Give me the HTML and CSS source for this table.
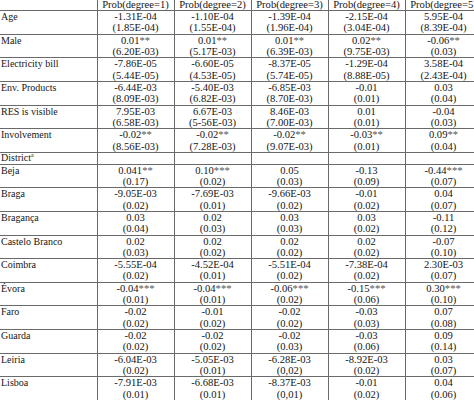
FILE: index.html
```html
<!DOCTYPE html>
<html>
<head>
<meta charset="utf-8">
<link rel="stylesheet" href="styles.css">
</head>
<body>
<table class="results">
<colgroup>
<col class="c-label"><col class="c-val"><col class="c-val"><col class="c-val"><col class="c-val"><col class="c-val">
</colgroup>
<thead>
<tr><th></th><th>Prob(degree=1)</th><th>Prob(degree=2)</th><th>Prob(degree=3)</th><th>Prob(degree=4)</th><th>Prob(degree=5)</th></tr>
</thead>
<tbody>
<tr><td class="label">Age</td><td>-1.31E-04<br>(1.85E-04)</td><td>-1.10E-04<br>(1.55E-04)</td><td>-1.39E-04<br>(1.96E-04)</td><td>-2.15E-04<br>(3.04E-04)</td><td>5.95E-04<br>(8.39E-04)</td></tr>
<tr><td class="label">Male</td><td>0.01<span class="sig">**</span><br>(6.20E-03)</td><td>0.01<span class="sig">**</span><br>(5.17E-03)</td><td>0.01<span class="sig">**</span><br>(6.39E-03)</td><td>0.02<span class="sig">**</span><br>(9.75E-03)</td><td>-0.06<span class="sig">**</span><br>(0.03)</td></tr>
<tr><td class="label">Electricity bill</td><td>-7.86E-05<br>(5.44E-05)</td><td>-6.60E-05<br>(4.53E-05)</td><td>-8.37E-05<br>(5.74E-05)</td><td>-1.29E-04<br>(8.88E-05)</td><td>3.58E-04<br>(2.43E-04)</td></tr>
<tr><td class="label">Env. Products</td><td>-6.44E-03<br>(8.09E-03)</td><td>-5.40E-03<br>(6.82E-03)</td><td>-6.85E-03<br>(8.70E-03)</td><td>-0.01<br>(0.01)</td><td>0.03<br>(0.04)</td></tr>
<tr><td class="label">RES is visible</td><td>7.95E-03<br>(6.58E-03)</td><td>6.67E-03<br>(5-56E-03)</td><td>8.46E-03<br>(7.00E-03)</td><td>0.01<br>(0.01)</td><td>-0.04<br>(0.03)</td></tr>
<tr><td class="label">Involvement</td><td>-0.02<span class="sig">**</span><br>(8.56E-03)</td><td>-0.02<span class="sig">**</span><br>(7.28E-03)</td><td>-0.02<span class="sig">**</span><br>(9.07E-03)</td><td>-0.03<span class="sig">**</span><br>(0.01)</td><td>0.09<span class="sig">**</span><br>(0.04)</td></tr>
<tr class="group"><td class="label">District<sup>a</sup></td><td></td><td></td><td></td><td></td><td></td></tr>
<tr><td class="label">Beja</td><td>0.041<span class="sig">**</span><br>(0.17)</td><td>0.10<span class="sig">***</span><br>(0.02)</td><td>0.05<br>(0.03)</td><td>-0.13<br>(0.09)</td><td>-0.44<span class="sig">***</span><br>(0.07)</td></tr>
<tr><td class="label">Braga</td><td>-9.05E-03<br>(0.02)</td><td>-7.69E-03<br>(0.01)</td><td>-9.66E-03<br>(0.02)</td><td>-0.01<br>(0.02)</td><td>0.04<br>(0.07)</td></tr>
<tr><td class="label">Bragança</td><td>0.03<br>(0.04)</td><td>0.02<br>(0.03)</td><td>0.03<br>(0.03)</td><td>0.03<br>(0.02)</td><td>-0.11<br>(0.12)</td></tr>
<tr><td class="label">Castelo Branco</td><td>0.02<br>(0.03)</td><td>0.02<br>(0.02)</td><td>0.02<br>(0.02)</td><td>0.02<br>(0.02)</td><td>-0.07<br>(0.10)</td></tr>
<tr><td class="label">Coimbra</td><td>-5.55E-04<br>(0.02)</td><td>-4.52E-04<br>(0.01)</td><td>-5.51E-04<br>(0.02)</td><td>-7.38E-04<br>(0.02)</td><td>2.30E-03<br>(0.07)</td></tr>
<tr><td class="label">Évora</td><td>-0.04<span class="sig">***</span><br>(0.01)</td><td>-0.04<span class="sig">***</span><br>(0.01)</td><td>-0.06<span class="sig">***</span><br>(0.02)</td><td>-0.15<span class="sig">***</span><br>(0.06)</td><td>0.30<span class="sig">***</span><br>(0.10)</td></tr>
<tr><td class="label">Faro</td><td>-0.02<br>(0.02)</td><td>-0.01<br>(0.02)</td><td>-0.02<br>(0.02)</td><td>-0.03<br>(0.03)</td><td>0.07<br>(0.08)</td></tr>
<tr><td class="label">Guarda</td><td>-0.02<br>(0.02)</td><td>-0.02<br>(0.02)</td><td>-0.02<br>(0.03)</td><td>-0.03<br>(0.06)</td><td>0.09<br>(0.14)</td></tr>
<tr><td class="label">Leiria</td><td>-6.04E-03<br>(0.02)</td><td>-5.05E-03<br>(0.01)</td><td>-6.28E-03<br>(0,02)</td><td>-8.92E-03<br>(0.02)</td><td>0.03<br>(0.07)</td></tr>
<tr><td class="label">Lisboa</td><td>-7.91E-03<br>(0.01)</td><td>-6.68E-03<br>(0.01)</td><td>-8.37E-03<br>(0,01)</td><td>-0.01<br>(0.02)</td><td>0.04<br>(0.06)</td></tr>
</tbody>
</table>
</body>
</html>
```
FILE: styles.css
```css
html, body {
  margin: 0;
  padding: 0;
  overflow: hidden;
  background: #ffffff;
}

.results {
  border-collapse: collapse;
  table-layout: fixed;
  width: 482px;
  margin: 0;
  font-family: "Liberation Serif", "Times New Roman", serif;
  font-size: 10.6px;
  line-height: 11.33px;
  color: #161616;
}

.c-label { width: 97px; }
.c-val { width: 77px; }

.results th,
.results td {
  padding: 0;
  border: 1px solid #6a6a6a;
  text-align: center;
  vertical-align: top;
  white-space: nowrap;
  overflow: hidden;
  font-weight: normal;
}

.results th:first-child,
.results td:first-child {
  border-left: none;
}

.results thead th {
  border-top: none;
  line-height: 10px;
}

.results td.label {
  text-align: left;
  padding-left: 1px;
  font-size: 10px;
}

.results .group td {
  line-height: 10.6px;
}

.results sup {
  font-size: 6px;
  line-height: 0;
  vertical-align: 4px;
}

.sig {
  color: #555555;
}
```
